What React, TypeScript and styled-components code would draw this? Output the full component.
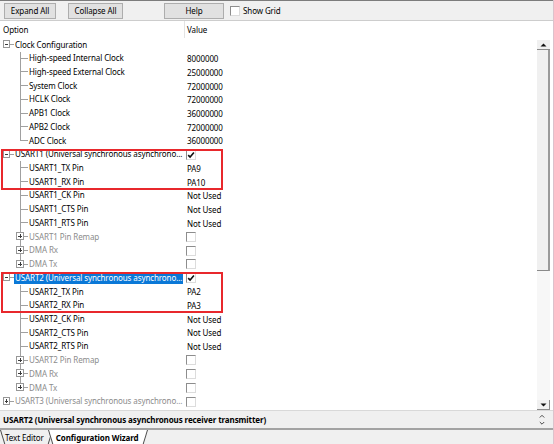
import React from 'react'
import styled, { createGlobalStyle } from 'styled-components'

const ROW_H = 13.73
const FONT = `'Noto Sans', 'Open Sans', 'DejaVu Sans', sans-serif`

const GlobalStyle = createGlobalStyle`
  html, body {
    margin: 0;
    padding: 0;
    background: #ffffff;
  }
`

type TreeNode = {
  label: string
  level: 0 | 1
  expander?: 'open' | 'closed'
  value?: string
  check?: boolean
  dim?: boolean
  selected?: boolean
  last?: boolean
}

type Section = {
  head: TreeNode
  children: TreeNode[]
  marked?: boolean
}

const usartChildren = (n: number, tx: string, rx: string): TreeNode[] => [
  { label: `USART${n}_TX Pin`, level: 1, value: tx },
  { label: `USART${n}_RX Pin`, level: 1, value: rx },
  { label: `USART${n}_CK Pin`, level: 1, value: 'Not Used' },
  { label: `USART${n}_CTS Pin`, level: 1, value: 'Not Used' },
  { label: `USART${n}_RTS Pin`, level: 1, value: 'Not Used' },
  { label: `USART${n} Pin Remap`, level: 1, expander: 'closed', check: false, dim: true },
  { label: 'DMA Rx', level: 1, expander: 'closed', check: false, dim: true },
  { label: 'DMA Tx', level: 1, expander: 'closed', check: false, dim: true, last: true },
]

const sections: Section[] = [
  {
    head: { label: 'Clock Configuration', level: 0, expander: 'open' },
    children: [
      { label: 'High-speed Internal Clock', level: 1, value: '8000000' },
      { label: 'High-speed External Clock', level: 1, value: '25000000' },
      { label: 'System Clock', level: 1, value: '72000000' },
      { label: 'HCLK Clock', level: 1, value: '72000000' },
      { label: 'APB1 Clock', level: 1, value: '36000000' },
      { label: 'APB2 Clock', level: 1, value: '72000000' },
      { label: 'ADC Clock', level: 1, value: '36000000', last: true },
    ],
  },
  {
    head: {
      label: 'USART1 (Universal synchronous asynchrono...',
      level: 0,
      expander: 'open',
      check: true,
    },
    children: usartChildren(1, 'PA9', 'PA10'),
    marked: true,
  },
  {
    head: {
      label: 'USART2 (Universal synchronous asynchrono...',
      level: 0,
      expander: 'open',
      check: true,
      selected: true,
    },
    children: usartChildren(2, 'PA2', 'PA3'),
    marked: true,
  },
  {
    head: {
      label: 'USART3 (Universal synchronous asynchrono...',
      level: 0,
      expander: 'closed',
      check: false,
      dim: true,
    },
    children: [],
  },
]

const Window = styled.div`
  width: 554px;
  height: 444px;
  box-sizing: border-box;
  display: flex;
  flex-direction: column;
  overflow: hidden;
  background: #ffffff;
  border-right: 1px solid #dcc2cc;
  font-family: ${FONT};
  font-size: 8px;
  letter-spacing: -0.1px;
  color: #000000;
`

const Toolbar = styled.div`
  flex: none;
  height: 21px;
  box-sizing: border-box;
  display: flex;
  align-items: center;
  padding-left: 4px;
  background: #f0f0f0;
  border-top: 1px solid #7c7c7c;
  border-bottom: 1px solid #cdcdcd;
`

const ToolButton = styled.button<{ $width: number; $gap?: number }>`
  width: ${p => p.$width}px;
  height: 16px;
  margin: 0 0 0 ${p => p.$gap ?? 0}px;
  padding: 0;
  box-sizing: border-box;
  border: 1px solid #adadad;
  background: #e1e1e1;
  font-family: ${FONT};
  font-size: 8px;
  letter-spacing: -0.1px;
  color: #000000;
`

const GridToggle = styled.label`
  display: flex;
  align-items: center;
  gap: 3px;
  margin-left: 6px;
`

const Header = styled.div`
  flex: none;
  height: 17px;
  display: grid;
  grid-template-columns: 184px 1fr;
  align-items: stretch;
  background: #ffffff;
`

const HeaderCell = styled.div<{ $divider?: boolean }>`
  display: flex;
  align-items: center;
  padding-left: ${p => (p.$divider ? 2 : 3)}px;
  border-left: ${p => (p.$divider ? '1px solid #e3e3e3' : 'none')};
`

const Body = styled.div`
  flex: 1;
  min-height: 0;
  display: flex;
`

const List = styled.div`
  flex: 1;
  min-width: 0;
  overflow: hidden;
`

const Row = styled.div`
  display: grid;
  grid-template-columns: 184px 1fr;
  height: ${ROW_H}px;
  align-items: center;
`

const OptionCell = styled.div`
  display: flex;
  align-items: center;
  height: 100%;
  min-width: 0;
`

const Label = styled.span<{ $dim?: boolean; $selected?: boolean }>`
  flex: 1;
  min-width: 0;
  height: 12.6px;
  line-height: 12.6px;
  padding-left: 1px;
  margin-right: 1px;
  white-space: nowrap;
  overflow: hidden;
  color: ${p => (p.$selected ? '#ffffff' : p.$dim ? '#8c8c8c' : '#000000')};
  background: ${p => (p.$selected ? '#0a78d7' : 'transparent')};
`

const ValueCell = styled.div`
  display: flex;
  align-items: center;
  height: 100%;
  padding-left: 3px;
  white-space: nowrap;
`

const Marked = styled.div`
  position: relative;

  &::after {
    content: '';
    position: absolute;
    left: 1px;
    top: 1px;
    bottom: -1px;
    width: 222px;
    box-sizing: border-box;
    border: 2px solid #e8282c;
    pointer-events: none;
  }
`

const Box = styled.span<{ $shift?: number }>`
  flex: none;
  width: 10px;
  height: 10px;
  box-sizing: border-box;
  margin-left: ${p => p.$shift ?? 0}px;
  display: inline-flex;
  align-items: center;
  justify-content: center;
  border: 1px solid;
  border-color: #8d8d8d #dcdcdc #dcdcdc #8d8d8d;
  background: #ffffff;
`

const ScrollBar = styled.div`
  flex: none;
  width: 13px;
  margin: 2px 3px 0 0;
  display: flex;
  flex-direction: column;
`

const ArrowButton = styled.div<{ $down?: boolean }>`
  flex: none;
  height: 10px;
  box-sizing: border-box;
  display: flex;
  align-items: center;
  justify-content: center;
  background: #f0f0f0;
  border-bottom: 1px solid #8a8a8a;
  border-right: ${p => (p.$down ? '1px solid #8a8a8a' : 'none')};
`

const Thumb = styled.div`
  flex: none;
  height: 221px;
  box-sizing: border-box;
  background: #f0f0f0;
  border-right: 2px solid #9a9a9a;
  border-bottom: 1px solid #8a8a8a;
`

const Track = styled.div`
  flex: 1;
  background: #f7f7f7;
`

const Description = styled.div`
  flex: none;
  height: 18px;
  box-sizing: border-box;
  display: flex;
  align-items: center;
  justify-content: space-between;
  padding: 0 8px 0 3px;
  background: #f0f0f0;
  border-top: 1px solid #d9d9d9;
  font-weight: 700;
  white-space: nowrap;
`

const TabBar = styled.div`
  flex: none;
  height: 16px;
  box-sizing: border-box;
  display: flex;
  align-items: stretch;
  background: #f0f0f0;
  border-top: 2px solid #a3a3a3;
`

const Tab = styled.div<{ $active?: boolean }>`
  position: relative;
  z-index: ${p => (p.$active ? 2 : 1)};
  display: flex;
  align-items: center;
  padding: 0 9px 0 ${p => (p.$active ? 8 : 5)}px;
  margin-left: ${p => (p.$active ? -5 : 0)}px;
  font-weight: ${p => (p.$active ? 700 : 400)};

  &::before,
  &::after {
    content: '';
    position: absolute;
    top: 0;
    bottom: 0;
    width: 60%;
    z-index: -1;
    background: ${p => (p.$active ? '#ffffff' : '#f0f0f0')};
  }

  &::before {
    left: 0;
    transform-origin: top left;
    transform: skewX(17deg);
    border-left: 1px solid #4a4a4a;
  }

  &::after {
    right: 0;
    transform-origin: top right;
    transform: skewX(-17deg);
    border-right: 1px solid #4a4a4a;
  }
`

const LINE = '#a0a0a0'

const Expander: React.FC<{ cx: number; cy: number; open: boolean }> = ({ cx, cy, open }) => (
  <g shapeRendering="crispEdges">
    <rect x={cx - 3.5} y={cy - 3.5} width={7} height={7} fill="#ffffff" stroke="#979797" />
    <line x1={cx - 2} x2={cx + 2} y1={cy} y2={cy} stroke="#3c3c3c" />
    {!open && <line x1={cx} x2={cx} y1={cy - 2} y2={cy + 2} stroke="#3c3c3c" />}
  </g>
)

const Guide: React.FC<{ node: TreeNode }> = ({ node }) => {
  const mid = Math.round(ROW_H / 2) - 0.5
  if (node.level === 0) {
    return (
      <svg width={14} height={ROW_H} viewBox={`0 0 14 ${ROW_H}`} style={{ flex: 'none' }}>
        <line x1={10} x2={14} y1={mid} y2={mid} stroke={LINE} shapeRendering="crispEdges" />
        {node.expander && <Expander cx={6.5} cy={mid} open={node.expander === 'open'} />}
      </svg>
    )
  }
  return (
    <svg width={28} height={ROW_H} viewBox={`0 0 28 ${ROW_H}`} style={{ flex: 'none' }}>
      <g stroke={LINE} shapeRendering="crispEdges">
        <line x1={20.5} x2={20.5} y1={0} y2={node.last ? mid : ROW_H} />
        <line x1={20.5} x2={28} y1={mid} y2={mid} />
      </g>
      {node.expander && <Expander cx={20.5} cy={mid} open={node.expander === 'open'} />}
    </svg>
  )
}

const Check: React.FC = () => (
  <svg width={8} height={8} viewBox="0 0 8 8">
    <path d="M1.2 4.1 L3.1 6.1 L6.9 1.6" fill="none" stroke="#111111" strokeWidth={1.6} />
  </svg>
)

const Triangle: React.FC<{ down?: boolean }> = ({ down }) => (
  <svg width={7} height={4} viewBox="0 0 7 4">
    <polygon points={down ? '0.5,0.5 6.5,0.5 3.5,3.5' : '0.5,3.5 6.5,3.5 3.5,0.5'} fill="#111111" />
  </svg>
)

const Spinner: React.FC = () => (
  <svg width={6} height={13} viewBox="0 0 6 13">
    <g fill="none" stroke="#4a4a4a" strokeWidth={1}>
      <path d="M0.8 4.5 L3 2.3 L5.2 4.5" />
      <path d="M0.8 9 L3 11.2 L5.2 9" />
    </g>
  </svg>
)

const TreeRow: React.FC<{ node: TreeNode }> = ({ node }) => (
  <Row>
    <OptionCell>
      <Guide node={node} />
      <Label $dim={node.dim} $selected={node.selected}>
        {node.label}
      </Label>
    </OptionCell>
    <ValueCell>
      {node.value}
      {node.check !== undefined && <Box $shift={-1}>{node.check && <Check />}</Box>}
    </ValueCell>
  </Row>
)

const App: React.FC = () => (
  <>
    <GlobalStyle />
    <Window>
      <Toolbar>
        <ToolButton $width={52}>Expand All</ToolButton>
        <ToolButton $width={55} $gap={12}>
          Collapse All
        </ToolButton>
        <ToolButton $width={60} $gap={41}>
          Help
        </ToolButton>
        <GridToggle>
          <Box />
          Show Grid
        </GridToggle>
      </Toolbar>

      <Header>
        <HeaderCell>Option</HeaderCell>
        <HeaderCell $divider>Value</HeaderCell>
      </Header>

      <Body>
        <List>
          {sections.map((s, i) => {
            const rows = [s.head, ...s.children]
            if (!s.marked) {
              return rows.map((n, j) => <TreeRow key={`${i}-${j}`} node={n} />)
            }
            return (
              <React.Fragment key={i}>
                <Marked>
                  {rows.slice(0, 3).map((n, j) => (
                    <TreeRow key={j} node={n} />
                  ))}
                </Marked>
                {rows.slice(3).map((n, j) => (
                  <TreeRow key={j + 3} node={n} />
                ))}
              </React.Fragment>
            )
          })}
        </List>
        <ScrollBar>
          <ArrowButton>
            <Triangle />
          </ArrowButton>
          <Thumb />
          <Track />
          <ArrowButton $down>
            <Triangle down />
          </ArrowButton>
        </ScrollBar>
      </Body>

      <Description>
        USART2 (Universal synchronous asynchronous receiver transmitter)
        <Spinner />
      </Description>

      <TabBar>
        <Tab>Text Editor</Tab>
        <Tab $active>Configuration Wizard</Tab>
      </TabBar>
    </Window>
  </>
)

export default App
